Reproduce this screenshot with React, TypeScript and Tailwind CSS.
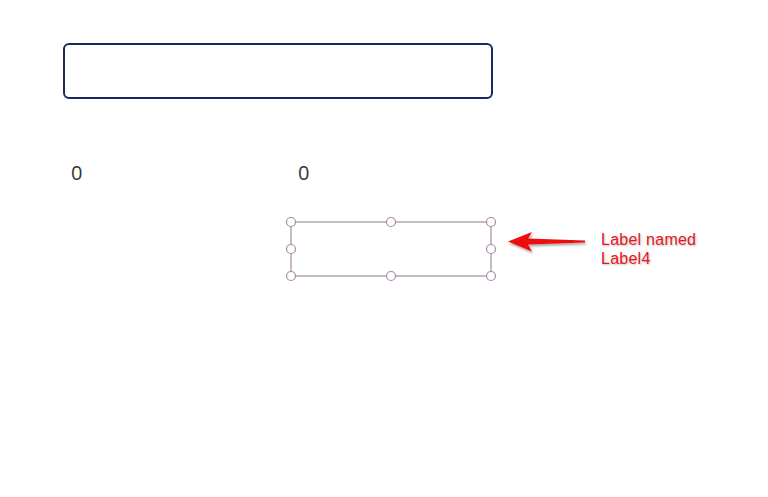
import React from "react";

const Handle = ({ x, y }: { x: number; y: number }) => (
  <circle cx={x} cy={y} r={4.5} fill="#ffffff" stroke="#a48ba5" strokeWidth={1.2} />
);

export default function App() {
  return (
    <div className="relative w-[768px] h-[497px] bg-white overflow-hidden" style={{ fontFamily: '"Open Sans", sans-serif' }}>
      {/* Text input */}
      <div className="absolute left-[63px] top-[43px] w-[430px] h-[56px] rounded-[6px] border-2 border-[#1c2866] bg-white" />

      {/* Labels */}
      <div className="absolute left-[71px] top-[159px] text-[20px] leading-[28px] text-[#333333]">0</div>
      <div className="absolute left-[298px] top-[159px] text-[20px] leading-[28px] text-[#333333]">0</div>

      {/* Selected Label4 with handles */}
      <svg className="absolute left-0 top-0" width={768} height={497}>
        <rect x={291} y={222} width={200} height={54} fill="none" stroke="#a48ba5" strokeWidth={1.2} />
        <Handle x={291} y={222} />
        <Handle x={391} y={222} />
        <Handle x={491} y={222} />
        <Handle x={291} y={249} />
        <Handle x={491} y={249} />
        <Handle x={291} y={276} />
        <Handle x={391} y={276} />
        <Handle x={491} y={276} />
        {/* Arrow */}
        <defs>
          <filter id="sh" x="-20%" y="-50%" width="140%" height="200%">
            <feGaussianBlur in="SourceAlpha" stdDeviation="1.2" />
            <feOffset dx="1" dy="1.5" result="b" />
            <feComponentTransfer>
              <feFuncA type="linear" slope="0.35" />
            </feComponentTransfer>
            <feMerge>
              <feMergeNode />
              <feMergeNode in="SourceGraphic" />
            </feMerge>
          </filter>
        </defs>
        <path
          d="M508 241.5 L532 232 L528 238.6 L585 240.4 L585 242.4 L528 244.6 L532 251.5 Z"
          fill="#ee1111"
          filter="url(#sh)"
        />
      </svg>

      <div
        className="absolute left-[601px] top-[230px] text-[16px] leading-[19px] tracking-[0.25px] text-[#e8141a]"
        style={{ fontFamily: '"Liberation Sans", Arial, sans-serif', textShadow: "1px 1px 2px rgba(0,0,0,0.25)" }}
      >
        <div>Label named</div>
        <div>Label4</div>
      </div>
    </div>
  );
}
